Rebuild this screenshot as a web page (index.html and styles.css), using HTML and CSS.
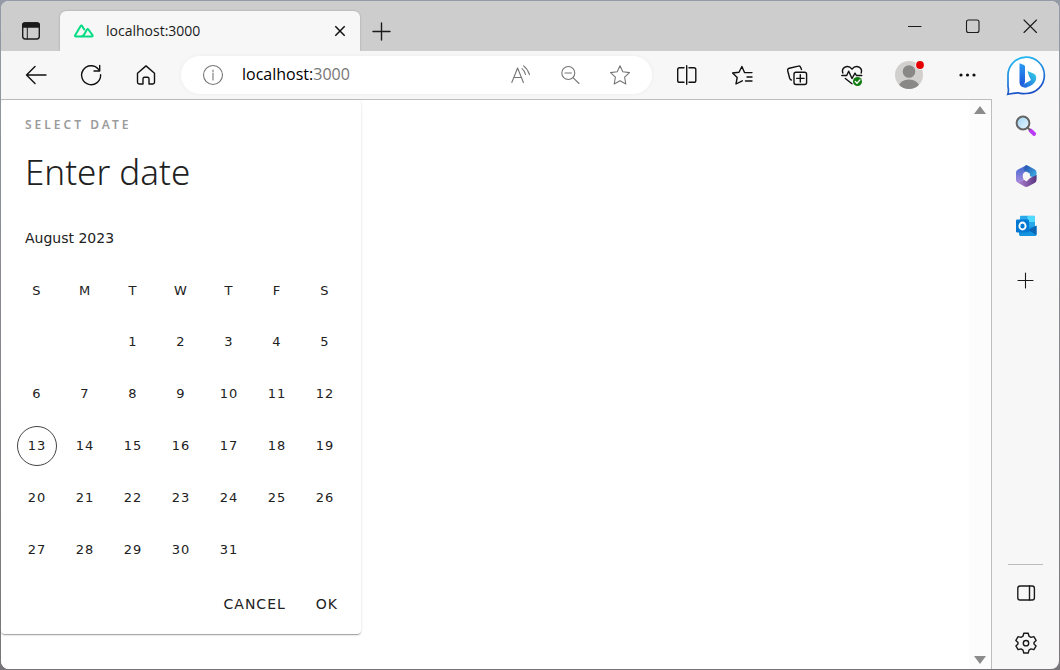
FILE: index.html
```html
<!DOCTYPE html>
<html lang="en">
<head>
<meta charset="utf-8">
<title>localhost:3000</title>
<link rel="stylesheet" href="styles.css">
</head>
<body>
<div class="window">
  <header class="tabstrip">
    <button class="tab-menu" aria-label="Tab actions">
      <svg class="icon" viewBox="0 0 24 24"><rect x="3.7" y="4" width="16.6" height="16" rx="2.4"/><path d="M3.7 8V6.400Q3.700 4 6.100 4H17.900Q20.300 4 20.300 6.400V8Z" fill="currentColor"/><path d="M8.300 8V20" stroke-width="1"/></svg>
    </button>
    <div class="tab">
      <svg class="favicon" viewBox="0 0 20 14"><path d="M11 12.500H2.200Q.4 12.500 1.300 10.900L6.500 2.200Q7.400.8 8.300 2.200L10.200 5.400M6.800 12.500Q9.300 12.300 10.300 10.300L13 5.500Q13.700 4.500 14.400 5.500L18.400 11Q19.200 12.500 17.600 12.500H12.500"/></svg>
      <span class="tab-title">localhost:3000</span>
      <button class="tab-close" aria-label="Close tab"><svg viewBox="0 0 12 12"><path d="M1.300 1.300 10.700 10.700M10.700 1.300 1.300 10.700"/></svg></button>
    </div>
    <button class="new-tab" aria-label="New tab"><svg class="icon" viewBox="0 0 24 24"><path d="M12.500 4V21M4 12.500H21"/></svg></button>
    <div class="window-controls">
      <button aria-label="Minimize"><svg class="icon thin" viewBox="0 0 24 24"><path d="M6.500 12.500H19"/></svg></button>
      <button aria-label="Maximize"><svg class="icon thin" viewBox="0 0 24 24"><rect x="6.500" y="6" width="12.500" height="12.500" rx="2"/></svg></button>
      <button aria-label="Close"><svg class="icon thin" viewBox="0 0 24 24"><path d="M6 6 18.500 18.500M18.500 6 6 18.500"/></svg></button>
    </div>
  </header>
  <div class="body">
    <div class="main">
      <nav class="toolbar">
        <button aria-label="Back"><svg class="icon" viewBox="0 0 24 24"><path d="M22 12H2.500M11 3.500 2.500 12 11 20.500"/></svg></button>
        <button aria-label="Refresh"><svg class="icon" viewBox="0 0 24 24"><path d="M21.600 11.700A9.500 9.500 0 1 1 19.600 6.400L20.500 7.500M20.700 2.500V8H15"/></svg></button>
        <button aria-label="Home"><svg class="icon" viewBox="0 0 24 24"><path d="M3.500 10.200 12 2.900 20.500 10.200V19.300Q20.500 21 18.800 21H15V15.800Q15 14.300 13.500 14.300H10.500Q9 14.300 9 15.800V21H5.200Q3.500 21 3.500 19.300Z"/></svg></button>
        <div class="address">
          <button aria-label="Site information"><svg class="icon thin" viewBox="0 0 24 24"><circle cx="12" cy="12" r="9.500"/><path d="M12 10V17M12 7V8.400"/></svg></button>
          <a class="url" href="#">localhost:<span class="port">3000</span></a>
          <button aria-label="Read aloud"><svg class="icon thin" viewBox="0 0 24 24"><path d="M3.800 19.500 9.600 5 15.400 19.500M5.800 14.500H13.400M14 5.600Q16.800 7.800 17.500 11.500M15.500 2.900Q19.800 6.100 21.500 11.700"/></svg></button>
          <button aria-label="Zoom out"><svg class="icon thin" viewBox="0 0 24 24"><circle cx="10.300" cy="10" r="6.500"/><path d="M15 14.700 21 20.500M7 10H13.500"/></svg></button>
          <button aria-label="Add to favorites"><svg class="icon thin" viewBox="0 0 24 24"><path d="M12 2.800 14.800 8.700 21.500 9.600 16.600 14.200 17.800 21 12 17.700 6.200 21 7.400 14.200 2.500 9.600 9.200 8.700Z"/></svg></button>
        </div>
        <button aria-label="Split screen"><svg class="icon" viewBox="0 0 24 24"><path d="M9 4.700H4.600Q2.700 4.700 2.700 6.600V17.400Q2.700 19.300 4.600 19.300H9M14 4.700H18.900Q20.800 4.700 20.800 6.600V17.400Q20.800 19.300 18.900 19.300H14M11.700 2.700V21.300"/></svg></button>
        <button aria-label="Favorites"><svg class="icon" viewBox="0 0 24 24"><path d="M14.500 9.600H22M17 14H22M15.500 18H22M14.500 9.600 11.900 3.500 9 9.200 2.600 10 7.200 14.500 6 21 12.300 17.800"/></svg></button>
        <button aria-label="Collections"><svg class="icon" viewBox="0 0 24 24"><rect x="9" y="9.200" width="12.600" height="12.300" rx="2"/><path d="M15.300 11.800V19M11.700 15.400H19M16.500 6.500 15.700 4.400Q15 2.600 13.300 3.100L4.300 5.200Q2.300 5.800 2.700 7.700L4.600 15Q5.200 17 6.500 17"/></svg></button>
        <button aria-label="Browser essentials"><svg class="icon" viewBox="0 0 24 24"><path d="M2.800 10Q1.600 6.500 4.500 4.400C7.500 2.500 10.400 4 12 6.200 13.600 4 16.500 2.500 19.500 4.400Q22.400 6.500 21.200 10M1.800 12.500H6.700L8.700 8.200 12 15.500 15 10.200 16.400 12.500H21.800M5.300 15.500 12 20.800"/><circle cx="17.500" cy="18.500" r="4.500" fill="#107c10" stroke="none"/><path d="M15.300 18.600 17 20.200 20 16.900" stroke="#fff"/></svg></button>
        <button class="profile" aria-label="Profile"><svg viewBox="0 0 30 30"><defs><clipPath id="head"><circle cx="14" cy="15" r="14"/></clipPath></defs><g clip-path="url(#head)"><rect width="30" height="30" fill="#d2d0ce"/><circle cx="14" cy="11.500" r="6.300" fill="#8a8886"/><ellipse cx="14" cy="26.500" rx="10" ry="7" fill="#8a8886"/></g><circle cx="25" cy="5" r="4.800" fill="#f7f7f7"/><circle cx="25" cy="5" r="3.900" fill="#e50000"/></svg></button>
        <button class="more" aria-label="Settings and more"><svg class="icon" viewBox="0 0 24 24"><g fill="currentColor" stroke="none"><circle cx="6" cy="12" r="1.600"/><circle cx="12.500" cy="12" r="1.600"/><circle cx="19" cy="12" r="1.600"/></g></svg></button>
      </nav>
      <div class="page">
        <main class="viewport">
          <section class="picker">
            <p class="overline">SELECT DATE</p>
            <h1>Enter date</h1>
            <p class="month">August 2023</p>
            <table class="days">
              <thead><tr><th>S</th><th>M</th><th>T</th><th>W</th><th>T</th><th>F</th><th>S</th></tr></thead>
              <tbody>
                <tr><td></td><td></td><td><button>1</button></td><td><button>2</button></td><td><button>3</button></td><td><button>4</button></td><td><button>5</button></td></tr>
                <tr><td><button>6</button></td><td><button>7</button></td><td><button>8</button></td><td><button>9</button></td><td><button>10</button></td><td><button>11</button></td><td><button>12</button></td></tr>
                <tr><td><button class="today">13</button></td><td><button>14</button></td><td><button>15</button></td><td><button>16</button></td><td><button>17</button></td><td><button>18</button></td><td><button>19</button></td></tr>
                <tr><td><button>20</button></td><td><button>21</button></td><td><button>22</button></td><td><button>23</button></td><td><button>24</button></td><td><button>25</button></td><td><button>26</button></td></tr>
                <tr><td><button>27</button></td><td><button>28</button></td><td><button>29</button></td><td><button>30</button></td><td><button>31</button></td><td></td><td></td></tr>
              </tbody>
            </table>
            <div class="actions"><button>CANCEL</button><button>OK</button></div>
          </section>
        </main>
        <div class="scrollbar">
          <svg viewBox="0 0 12 8"><path d="M6 0 12 8H0Z"/></svg>
          <svg viewBox="0 0 12 8"><path d="M0 0H12L6 8Z"/></svg>
        </div>
      </div>
    </div>
    <aside class="sidebar">
      <button class="bing" aria-label="Bing"><svg viewBox="0 0 40 40"><defs><linearGradient id="ring" x1="0" y1="0" x2=".3" y2="1"><stop offset="0" stop-color="#25c4f5"/><stop offset="1" stop-color="#1b50c8"/></linearGradient><linearGradient id="b1" x1="0" y1="0" x2="0" y2="1"><stop offset="0" stop-color="#2b9cf2"/><stop offset="1" stop-color="#1c4fd8"/></linearGradient><linearGradient id="b2" x1="0" y1="1" x2="1" y2="0"><stop offset="0" stop-color="#1f56dc"/><stop offset="1" stop-color="#35d6e8"/></linearGradient></defs><path d="M1.800 38.300Q3 35 2 30.500V20A18.200 18.200 0 1 1 20 37.500Q15 38 12 36.800 7 37 1.800 38.300Z" fill="#fff" stroke="url(#ring)" stroke-width="1.700"/><path d="M13.500 7.300 18 9Q19 9.500 19 11V26L16.500 31Q13.500 29.500 13.500 26Z" fill="url(#b1)"/><path d="M21.500 15 28 17.800Q31 19.500 30 24 28.500 28.500 20.500 31.500 17 32.500 14 28.500L19 27.500 25 24 23 20Z" fill="url(#b2)"/></svg></button>
      <button aria-label="Search"><svg viewBox="0 0 24 24"><defs><linearGradient id="lens" x1="0" y1="0" x2="1" y2="1"><stop offset="0" stop-color="#9fd3f5"/><stop offset="1" stop-color="#e9f8ff"/></linearGradient></defs><path d="M16.500 16.500 20.200 20" stroke="#b93bf5" stroke-width="3.800" stroke-linecap="round"/><path d="M13.500 13.500 16 16" stroke="#666" stroke-width="2"/><circle cx="9" cy="9" r="6.400" fill="url(#lens)" stroke="#646464" stroke-width="2"/></svg></button>
      <button aria-label="Microsoft 365"><svg viewBox="0 0 24 24"><defs><linearGradient id="m1" x1="0" y1="0" x2="1" y2="1"><stop offset="0" stop-color="#254cae"/><stop offset="1" stop-color="#43bdea"/></linearGradient><linearGradient id="m2" x1="0" y1="0" x2="0" y2="1"><stop offset="0" stop-color="#3a66cc"/><stop offset="1" stop-color="#a98be0"/></linearGradient><linearGradient id="m3" x1="0" y1="0" x2="1" y2="0"><stop offset="0" stop-color="#b184d6"/><stop offset="1" stop-color="#5a347f"/></linearGradient></defs><path d="M12.500 1.200 4 5.500Q2 6.500 2 8.500V16Q2 18 4 18.500L9.500 16V9L14 6Z" fill="url(#m2)"/><path d="M11 1.800Q12.800.9 14.500 1.900L20.500 5.200Q22.500 6.300 22.500 8.500V15L15.800 12V9.500L10 6.500Z" fill="url(#m1)"/><path d="M22.500 11V16Q22.500 17.800 21 18.700L14 22.500Q12.300 23.300 10.700 22.500L3.500 18.400 10 15.700 12.500 17.500 16 14Z" fill="url(#m3)"/><circle cx="12.300" cy="12" r="3.600" fill="#f7f7f7"/></svg></button>
      <button aria-label="Outlook"><svg viewBox="0 0 24 24"><path d="M7 1.800H20Q21 1.800 21 3V16H6V3Q6 1.800 7 1.800Z" fill="#28a8ea"/><path d="M13.500 2H21V8H13.500Z" fill="#50d9ff"/><path d="M6 8H13.500V15H6Z" fill="#0364b8"/><path d="M5 21V15L22.500 12V20.500Q22.500 22 21 22H6Z" fill="#1493df"/><path d="M14 16 22.500 11.500V21Z" fill="#0a66b5"/><rect x="2" y="5.500" width="13" height="13" rx="1.200" fill="#0078d4"/><ellipse cx="8.500" cy="12" rx="3.100" ry="3.500" fill="none" stroke="#fff" stroke-width="1.900"/></svg></button>
      <button class="add" aria-label="Customize"><svg class="icon thin" viewBox="0 0 24 24"><path d="M11.500 5V20M4 12.500H19"/></svg></button>
      <div class="sidebar-bottom">
        <button aria-label="Hide sidebar"><svg class="icon" viewBox="0 0 24 24"><rect x="3.800" y="5" width="16.600" height="14" rx="2.200"/><path d="M15.500 5V19"/></svg></button>
        <button aria-label="Settings"><svg class="icon" viewBox="0 0 24 24"><path d="M9.800 2.300H14.200L15 5.200 17 6.400 19.900 5.600 22.100 9.400 20 11.500V12.900L22.100 14.900 19.900 18.700 17 17.900 15 19.100 14.200 22H9.800L9 19.100 7 17.900 4.100 18.700 1.900 14.900 4 12.900V11.500L1.900 9.400 4.100 5.600 7 6.400 9 5.200Z"/><circle cx="12" cy="12.200" r="2.700"/></svg></button>
      </div>
    </aside>
  </div>
</div>
</body>
</html>
```
FILE: styles.css
```css
* { box-sizing: border-box; }
body {
  margin: 0;
  min-height: 100vh;
  display: flex;
  padding: 1px;
  background: linear-gradient(#949aa6, #85888c 50%, #77757a);
  font-family: "Open Sans", "Noto Sans", sans-serif;
  color: #1b1b1b;
}
button {
  border: 0;
  padding: 0;
  background: none;
  color: inherit;
  font: inherit;
  display: flex;
  align-items: center;
  justify-content: center;
  flex: none;
}
svg { display: block; fill: none; }
.icon { width: 24px; height: 24px; stroke: currentColor; stroke-width: 1.4; stroke-linejoin: round; stroke-linecap: round; }
.thin { stroke-width: 1.1; }

.window { flex: 1; display: flex; flex-direction: column; border-radius: 8px; overflow: hidden; background: #f7f7f7; }
.tabstrip { display: flex; height: 50px; overflow: hidden; background: #cdcdcd; }
.tab-menu { width: 59px; padding-top: 10px; }
.tab {
  width: 300px;
  margin-top: 10px;
  padding: 0 12px 0 14px;
  display: flex;
  align-items: center;
  gap: 12px;
  border-radius: 6px 6px 0 0;
  background: #f7f7f7;
  box-shadow: 0 0 2px #999;
}
.favicon { width: 20px; height: 14px; stroke: #00dc82; stroke-width: 2; stroke-linejoin: round; stroke-linecap: round; }
.tab-title { flex: 1; padding-bottom: 2px; font-size: 14px; }
.tab-close { width: 16px; height: 16px; }
.tab-close svg { width: 12px; height: 12px; stroke: #111; stroke-width: 1.500; }
.new-tab { width: 42px; padding-top: 10px; }
.window-controls { margin-left: auto; display: flex; }
.window-controls button { width: 58px; }

.body { flex: 1; display: flex; }
.main { flex: 1; display: flex; flex-direction: column; }
.toolbar { display: flex; align-items: center; height: 49px; padding-left: 7px; border-bottom: 1px solid #bdbdbd; color: #111; }
.toolbar > button { width: 55px; height: 40px; }
.address { flex: 1; display: flex; align-items: center; height: 38px; margin: 0 7px 0 8px; padding: 0 7px; border-radius: 19px; background: #fff; box-shadow: 0 0 4px #ececec; color: #767676; }
.address button { width: 50px; height: 36px; }
.url { flex: 1; padding: 0 0 2px 4px; font-size: 16px; color: #000; text-decoration: none; }
.port { color: #767676; }
.toolbar > .profile { width: 62px; }
.profile svg { width: 30px; height: 30px; }
.toolbar > .more { width: 51px; }

.page { flex: 1; display: flex; background: #fff; border-right: 1px solid #bdbdbd; }
.viewport { flex: 1; }
.scrollbar { width: 22px; padding: 6px 0 5px; display: flex; flex-direction: column; align-items: center; justify-content: space-between; background: #fcfcfc; }
.scrollbar svg { width: 12px; height: 8px; fill: #8b8b8b; }

.picker {
  width: 360px;
  padding: 16px 12px 12px;
  border-radius: 4px;
  background: #fff;
  box-shadow: 0 2px 1px -1px rgba(0,0,0,.2), 0 1px 1px rgba(0,0,0,.14), 0 1px 3px rgba(0,0,0,.12);
  font-family: "DejaVu Sans", Verdana, sans-serif;
  font-size: 13px;
  color: #212121;
}
.picker p, .picker h1 { margin: 0; padding-left: 12px; }
.picker .overline { font-family: "Noto Sans", sans-serif; font-size: 12px; line-height: 18px; font-weight: 600; letter-spacing: 3px; color: #9b9b9b; }
.picker h1 { margin-top: 16px; font-family: "Noto Sans", sans-serif; font-size: 35px; line-height: 44px; font-weight: 300; }
.picker .month { margin-top: 34px; font-size: 14px; line-height: 20px; }
.days { margin-top: 16px; width: 100%; table-layout: fixed; border-collapse: collapse; letter-spacing: 1px; }
.days th { height: 52px; padding: 0; font-weight: 400; }
.days td { height: 52px; padding: 0; }
.days button { width: 40px; height: 40px; margin: 0 auto; padding-bottom: 1px; border-radius: 50%; letter-spacing: inherit; }
.days .today { border: 1px solid #444; }
.actions { display: flex; justify-content: flex-end; margin-top: 10px; gap: 8px; }
.actions button { height: 36px; padding: 0 11px; font-size: 14px; letter-spacing: 1px; }

.sidebar { width: 67px; display: flex; flex-direction: column; align-items: center; }
.sidebar button { height: 50px; width: 50px; }
.sidebar button svg { width: 24px; height: 24px; }
.sidebar .bing svg { width: 40px; height: 40px; }
.sidebar .add { margin-top: 4px; }
.sidebar-bottom { margin: auto 0 1px; width: 35px; padding-top: 3px; border-top: 1px solid #bdbdbd; display: flex; flex-direction: column; align-items: center; }
```
